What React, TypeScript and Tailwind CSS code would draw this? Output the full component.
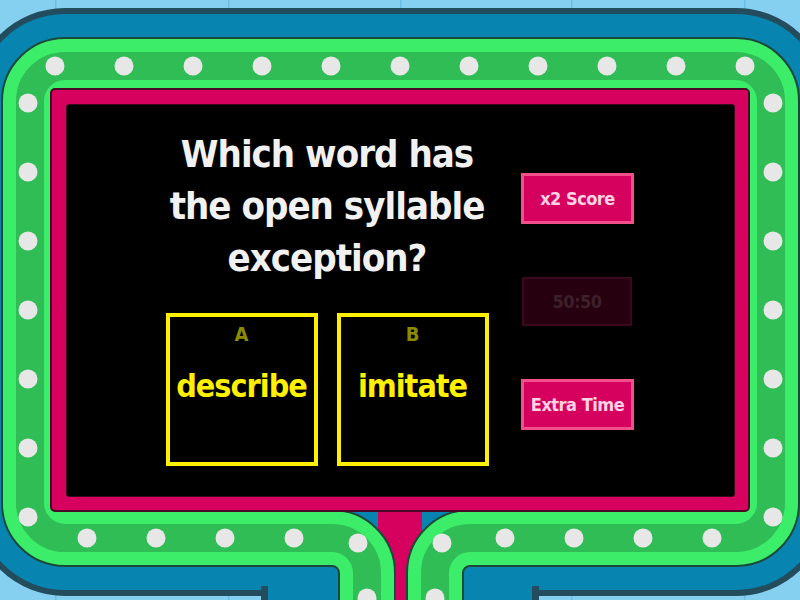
import React from 'react';

const font = { fontFamily: '"DejaVu Sans Condensed", "Liberation Sans Narrow", "Liberation Sans", sans-serif' };

// centre line of the green light strip, from the left foot of the pole round the board to the right foot
const ring =
  'M 367 612 V 573 A 35 35 0 0 0 332 538 H 65 A 35 35 0 0 1 30 503 V 101 A 35 35 0 0 1 65 66 H 736 A 35 35 0 0 1 771 101 V 503 A 35 35 0 0 1 736 538 H 470 A 35 35 0 0 0 435 573 V 612';

const dots: [number, number][] = [
  ...Array.from({ length: 11 }, (_, i) => [55 + i * 69, 66] as [number, number]),
  ...Array.from({ length: 7 }, (_, i) => [28, 103 + i * 69] as [number, number]),
  ...Array.from({ length: 7 }, (_, i) => [773, 103 + i * 69] as [number, number]),
  ...Array.from({ length: 4 }, (_, i) => [87 + i * 69, 538] as [number, number]),
  ...Array.from({ length: 4 }, (_, i) => [712 - i * 69, 538] as [number, number]),
  [358, 543],
  [442, 543],
  [367, 598],
  [435, 598],
];

const StageFrame = () => (
  <svg className="absolute inset-0" width="800" height="600" viewBox="0 0 800 600">
    <rect width="800" height="600" fill="#85cff0" />
    {[55, 228, 400, 571, 744].map((x) => (
      <rect key={x} x={x} y="0" width="1.5" height="600" fill="#6ebde3" />
    ))}
    <path d={ring} fill="none" stroke="#234d5c" strokeWidth="116" />
    <path d={ring} fill="none" stroke="#0884b1" strokeWidth="104" />
    <rect x="261" y="586" width="278" height="20" fill="#234d5c" />
    <rect x="268" y="584" width="264" height="20" fill="#0884b1" />
    <rect x="378" y="500" width="44" height="110" fill="#d6005e" />
    <path d={ring} fill="none" stroke="#1c4a3a" strokeWidth="58" />
    <path d={ring} fill="none" stroke="#3ced6a" strokeWidth="54" />
    <path d={ring} fill="none" stroke="#30bd56" strokeWidth="28" />
    {dots.map(([x, y], i) => (
      <circle key={i} cx={x} cy={y} r="9.5" fill="#e7e7e7" />
    ))}
  </svg>
);

const PowerUp = ({ label, off }: { label: string; off?: boolean }) => (
  <div
    className={`flex items-center justify-center font-bold text-[18px] tracking-[-0.5px] ${
      off
        ? 'w-[110px] h-[49px] ml-[1px] bg-[#26000f] border-2 border-[#3a0a1c] text-[#3d2029]'
        : 'w-[113px] h-[51px] bg-[#d6005e] border-[3px] border-[#f2508b] text-[#ffd3e4]'
    }`}
  >
    {label}
  </div>
);

const Answer = ({ letter, word }: { letter: string; word: string }) => (
  <div className="w-[152px] h-[153px] border-4 border-[#fff000] flex flex-col items-center">
    <div className="mt-[4px] text-[20px] leading-[26px] font-bold text-[#8c8a00]">{letter}</div>
    <div className="mt-[19px] text-[32px] leading-[40px] font-bold tracking-[-1px] whitespace-nowrap text-[#fff000]">
      {word}
    </div>
  </div>
);

export default function App() {
  return (
    <div className="relative w-[800px] h-[600px] overflow-hidden" style={font}>
      <StageFrame />
      <div className="relative ml-[50px] mt-[88px] w-[700px] h-[424px] rounded-[5px] border-2 border-[#4a0a26] bg-[#d6005e] pt-[14px] pl-[14px]">
        <div className="w-[669px] h-[393px] rounded-[3px] border border-[#3a0a1e] bg-black flex">
          <div className="ml-[98px] w-[324px] flex flex-col items-center">
            <h1 className="mt-[23px] text-center text-[38px] leading-[52px] font-bold tracking-[-1px] whitespace-nowrap text-[#f1f1f1]">
              Which word has
              <br />
              the open syllable
              <br />
              exception?
            </h1>
            <div className="mt-[29px] flex gap-[19px]">
              <Answer letter="A" word="describe" />
              <Answer letter="B" word="imitate" />
            </div>
          </div>
          <div className="ml-[32px] mt-[68px] flex flex-col gap-[53px]">
            <PowerUp label="x2 Score" />
            <PowerUp label="50:50" off />
            <PowerUp label="Extra Time" />
          </div>
        </div>
      </div>
    </div>
  );
}
